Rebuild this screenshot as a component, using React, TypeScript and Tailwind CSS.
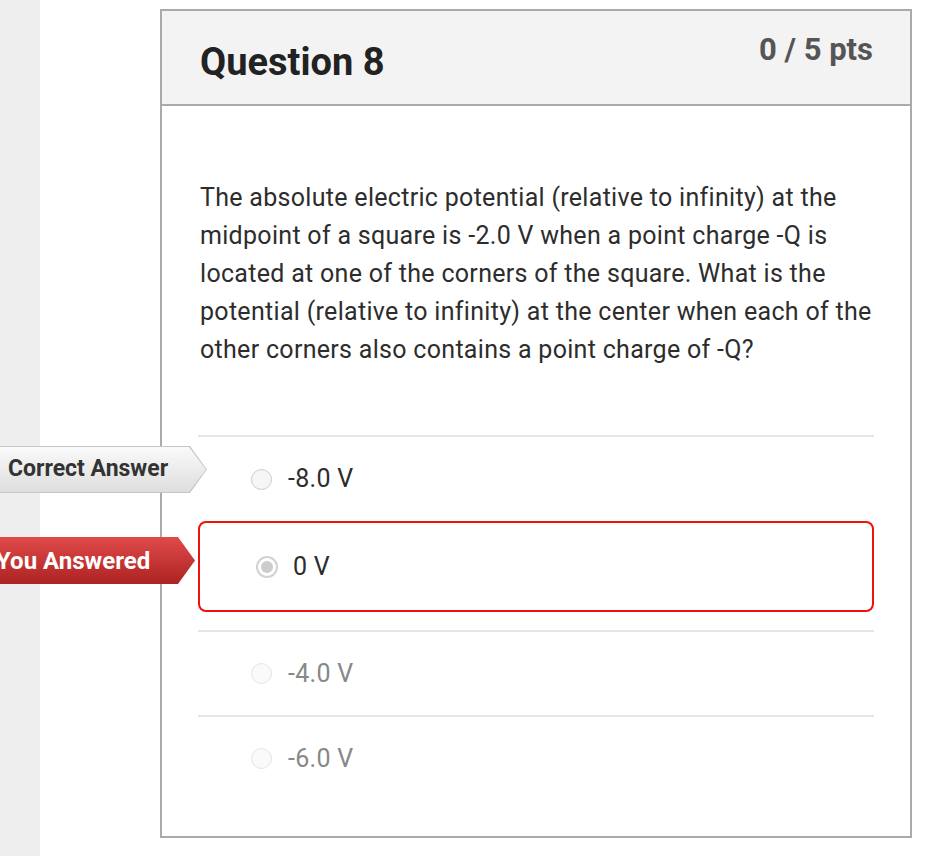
import React from "react";

type Answer = {
    text: string;
    state: "correct" | "picked" | "other";
};

const ANSWERS: Answer[] = [
    { text: "-8.0 V", state: "correct" },
    { text: "0 V", state: "picked" },
    { text: "-4.0 V", state: "other" },
    { text: "-6.0 V", state: "other" },
];

function Radio({ state }: { state: Answer["state"] }) {
    if (state === "picked") {
        return (
            <span className="w-[22px] h-[22px] rounded-full border-2 border-[#d2d2d2] bg-white flex items-center justify-center shrink-0">
                <span className="w-[12px] h-[12px] rounded-full bg-[#cccccc]" />
            </span>
        );
    }
    return (
        <span
            className={
                state === "correct"
                    ? "w-[21px] h-[21px] rounded-full border-[1.5px] border-[#cbcbcb] bg-[#f6f6f6] shrink-0"
                    : "w-[21px] h-[21px] rounded-full border-[1.5px] border-[#e4e4e4] bg-[#fafafa] shrink-0"
            }
        />
    );
}

export default function App() {
    return (
        <div className="flex min-h-[856px] bg-white font-['Roboto','Liberation_Sans',sans-serif]">
            {/* left gutter */}
            <div className="w-[40px] shrink-0 bg-[#eeeeee]" />

            <div className="pl-[120px] pt-[9px]">
                <div className="w-[752px] border-2 border-[#aaaaaa] bg-white">
                    {/* header */}
                    <div className="h-[95px] bg-[#f3f3f3] border-b-2 border-[#aaaaaa] pl-[38px] pr-[37px] flex justify-between items-start">
                        <h2 className="mt-[32px] text-[38px] leading-[38px] font-bold text-[#222222]">Question 8</h2>
                        <div className="mt-[23px] text-[31px] leading-[31px] font-bold text-[#555555]">0 / 5 pts</div>
                    </div>

                    {/* body */}
                    <div className="pt-[73px] pl-[38px] pr-[34px] text-[25px] tracking-[0.3px] leading-[38px] text-[#2d2d2d]">
                        The absolute electric potential (relative to infinity) at the midpoint of a square is -2.0 V when a
                        point charge -Q is located at one of the corners of the square. What is the potential (relative to
                        infinity) at the center when each of the other corners also contains a point charge of -Q?
                    </div>

                    {/* answers */}
                    <div className="mx-[36px] mt-[66px] pb-[36px] text-[25px] tracking-[0.3px]">
                        {/* correct answer */}
                        <div className="relative h-[86px] border-t-2 border-[#e6e6e6] flex items-center pl-[53px] gap-[16px] text-[#2d2d2d]">
                            <div className="absolute left-[-210px] top-[9px] w-[219px] h-[47px] bg-[#c6c6c6] tracking-normal [clip-path:polygon(0_0,calc(100%-17px)_0,100%_50%,calc(100%-17px)_100%,0_100%)]">
                                <div className="absolute inset-[1px] bg-gradient-to-b from-[#fafafa] to-[#dedede] [clip-path:polygon(0_0,calc(100%-17px)_0,100%_50%,calc(100%-17px)_100%,0_100%)] flex items-center pl-[19px] text-[23px] font-bold text-[#333333]">
                                    Correct Answer
                                </div>
                            </div>
                            <Radio state={ANSWERS[0].state} />
                            <span>{ANSWERS[0].text}</span>
                        </div>

                        {/* picked (wrong) answer */}
                        <div className="relative h-[91px] border-2 border-[#f01010] rounded-[8px] flex items-center pl-[56px] gap-[15px] text-[#2d2d2d]">
                            <div className="absolute left-[-212px] top-[14px] w-[207px] h-[47px] bg-gradient-to-b from-[#e04a4a] to-[#ad2222] tracking-normal [clip-path:polygon(0_0,calc(100%-17px)_0,100%_50%,calc(100%-17px)_100%,0_100%)] flex items-center pl-[8px] text-[24px] font-bold text-white">
                                You Answered
                            </div>
                            <Radio state={ANSWERS[1].state} />
                            <span>{ANSWERS[1].text}</span>
                        </div>

                        {ANSWERS.slice(2).map((a) => (
                            <div
                                key={a.text}
                                className="h-[85px] border-t-2 border-[#e6e6e6] flex items-center pl-[53px] gap-[16px] text-[#888888] [&:nth-child(3)]:mt-[18px]"
                            >
                                <Radio state={a.state} />
                                <span>{a.text}</span>
                            </div>
                        ))}
                    </div>
                </div>
            </div>
        </div>
    );
}
